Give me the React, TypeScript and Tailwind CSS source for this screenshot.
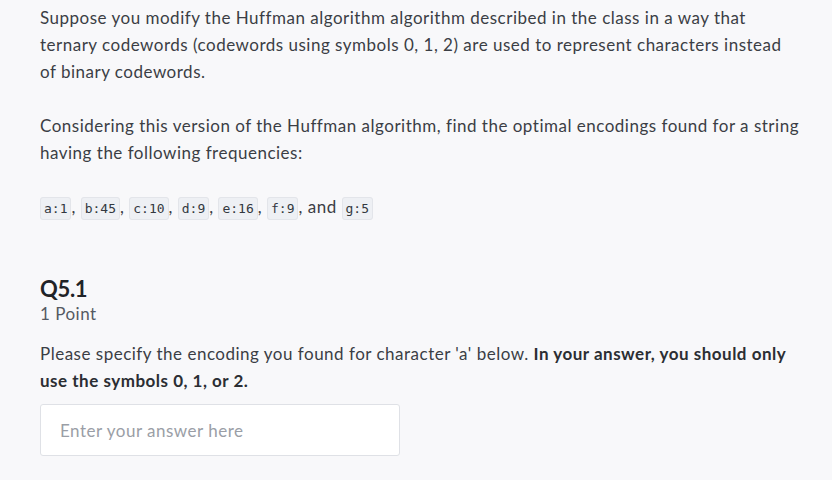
import React from "react";

const Code: React.FC<{ children: React.ReactNode }> = ({ children }) => (
  <code className="rounded-[3px] border border-[#e3e5ea] bg-[#eef0f4] px-[3px] py-[3px] font-['DejaVu_Sans_Mono',monospace] text-[13px] tracking-normal text-[#333840]">
    {children}
  </code>
);

export default function App() {
  return (
    <div className="min-h-[480px] w-[832px] bg-[#f8f8fa] font-['Lato',sans-serif] text-[17px] leading-[27px] tracking-[0.5px] text-[#3b3e45]">
      <div className="pl-10 pr-8 pt-[4px]">
        <p>
          Suppose you modify the Huffman algorithm algorithm described in the class in a way that ternary codewords
          (codewords using symbols 0, 1, 2) are used to represent characters instead of binary codewords.
        </p>
        <p className="mt-[27px]">
          Considering this version of the Huffman algorithm, find the optimal encodings found for a string having the
          following frequencies:
        </p>
        <p className="mt-[27px]">
          <Code>a:1</Code>, <Code>b:45</Code>, <Code>c:10</Code>, <Code>d:9</Code>, <Code>e:16</Code>,{" "}
          <Code>f:9</Code>, and <Code>g:5</Code>
        </p>

        <h2 className="mt-[53px] text-[22px] font-bold leading-[28px] tracking-[-0.3px] text-[#1f2328]">Q5.1</h2>
        <div className="leading-[22px] text-[#555a62]">1 Point</div>

        <p className="mt-[15px]">
          Please specify the encoding you found for character 'a' below.{" "}
          <strong className="font-bold text-[#2b2e33]">In your answer, you should only use the symbols 0, 1, or 2.</strong>
        </p>

        <div className="mt-[10px] flex h-[52px] w-[360px] items-center rounded-[3px] border border-[#dfe1e6] bg-white px-[19px] text-[#9a9ea6]">
          Enter your answer here
        </div>
      </div>
    </div>
  );
}
